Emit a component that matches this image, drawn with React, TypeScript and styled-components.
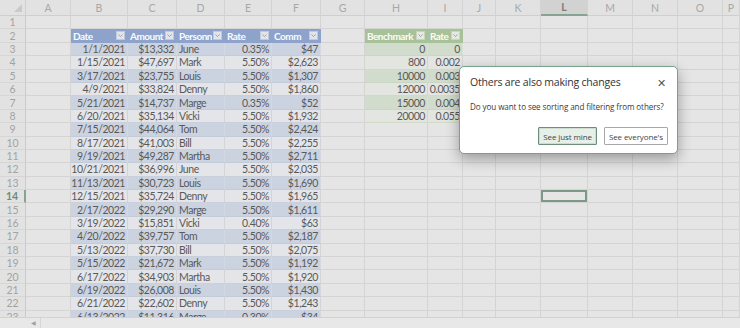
import styled, { createGlobalStyle, css } from "styled-components";

const GlobalStyle = createGlobalStyle`
  html, body {
    margin: 0;
    padding: 0;
    background: #e5e5e5;
  }
  * { box-sizing: border-box; }
`;

const cellFont = `"Lato", "Liberation Sans", sans-serif`;
const uiFont = `"Open Sans", "Noto Sans", sans-serif`;

const COL_WIDTHS = [45, 57, 49, 48, 47, 49, 44, 63, 35, 33, 45, 47, 45, 45, 45];
const LETTERS = "ABCDEFGHIJKLMNOP".split("");
const template = `26px ${COL_WIDTHS.map(w => w + "px").join(" ")} 1fr`;
const ACTIVE_COL = 12; // L
const ACTIVE_ROW = 14;

type Kind = "plain" | "blueHead" | "blueDark" | "blueLight" | "greenHead" | "greenDark" | "greenLight";
type CellData = { text?: string; kind: Kind; align?: "left" | "right"; filter?: boolean };

const sales = [
  ["1/1/2021", "$13,332", "June", "0.35%", "$47"],
  ["1/15/2021", "$47,697", "Mark", "5.50%", "$2,623"],
  ["3/17/2021", "$23,755", "Louis", "5.50%", "$1,307"],
  ["4/9/2021", "$33,824", "Denny", "5.50%", "$1,860"],
  ["5/21/2021", "$14,737", "Marge", "0.35%", "$52"],
  ["6/20/2021", "$35,134", "Vicki", "5.50%", "$1,932"],
  ["7/15/2021", "$44,064", "Tom", "5.50%", "$2,424"],
  ["8/17/2021", "$41,003", "Bill", "5.50%", "$2,255"],
  ["9/19/2021", "$49,287", "Martha", "5.50%", "$2,711"],
  ["10/21/2021", "$36,996", "June", "5.50%", "$2,035"],
  ["11/13/2021", "$30,723", "Louis", "5.50%", "$1,690"],
  ["12/15/2021", "$35,724", "Denny", "5.50%", "$1,965"],
  ["2/17/2022", "$29,290", "Marge", "5.50%", "$1,611"],
  ["3/19/2022", "$15,851", "Vicki", "0.40%", "$63"],
  ["4/20/2022", "$39,757", "Tom", "5.50%", "$2,187"],
  ["5/13/2022", "$37,730", "Bill", "5.50%", "$2,075"],
  ["5/15/2022", "$21,672", "Mark", "5.50%", "$1,192"],
  ["6/17/2022", "$34,903", "Martha", "5.50%", "$1,920"],
  ["6/19/2022", "$26,008", "Louis", "5.50%", "$1,430"],
  ["6/21/2022", "$22,602", "Denny", "5.50%", "$1,243"],
  ["6/13/2022", "$11,316", "Marge", "0.30%", "$34"],
];
const salesHead = ["Date", "Amount", "Personnel", "Rate", "Comm"];
const salesAlign: ("left" | "right")[] = ["right", "right", "left", "right", "right"];

const bench = [
  ["0", "0"],
  ["800", "0.002"],
  ["10000", "0.003"],
  ["12000", "0.0035"],
  ["15000", "0.004"],
  ["20000", "0.055"],
];

function buildRow(r: number): CellData[] {
  const cells: CellData[] = LETTERS.map(() => ({ kind: "plain" as Kind }));
  if (r === 2) {
    salesHead.forEach((h, i) => (cells[1 + i] = { text: h, kind: "blueHead", filter: true }));
    cells[7] = { text: "Benchmark", kind: "greenHead", filter: true };
    cells[8] = { text: "Rate", kind: "greenHead", filter: true };
  } else if (r >= 3) {
    const band = (r - 3) % 2 === 0;
    const s = sales[r - 3];
    s.forEach((v, i) => (cells[1 + i] = { text: v, kind: band ? "blueDark" : "blueLight", align: salesAlign[i] }));
    const b = bench[r - 3];
    if (b) {
      cells[7] = { text: b[0], kind: band ? "greenDark" : "greenLight", align: "right" };
      cells[8] = { text: b[1], kind: band ? "greenDark" : "greenLight", align: "right" };
    }
  }
  return cells;
}

const Page = styled.div`
  position: relative;
  width: 740px;
  height: 328px;
  overflow: hidden;
  display: flex;
  flex-direction: column;
  background: #e5e5e5;
`;

const SheetArea = styled.div`
  height: 317px;
  overflow: hidden;
`;

const GridRow = styled.div<{ $h: number }>`
  display: grid;
  grid-template-columns: ${template};
  height: ${p => p.$h}px;
`;

const Corner = styled.div`
  position: relative;
  background: #e2e2e2;
  border-right: 1px solid #cfcfcf;
  border-bottom: 1px solid #cfcfcf;
  &::after {
    content: "";
    position: absolute;
    right: 3px;
    bottom: 3px;
    border-style: solid;
    border-width: 0 0 8px 8px;
    border-color: transparent transparent #c9c9c9 transparent;
  }
`;

const ColHead = styled.div<{ $active?: boolean }>`
  display: flex;
  align-items: center;
  justify-content: center;
  font-family: ${cellFont};
  font-size: 10.5px;
  color: #a8a8a8;
  background: #e2e2e2;
  border-right: 1px solid #d3d3d3;
  border-bottom: 1px solid #cfcfcf;
  ${p =>
    p.$active &&
    css`
      background: #d2d2d2;
      color: #7d7d7d;
      font-weight: 700;
      border-bottom: 2px solid #86a491;
    `}
`;

const RowHead = styled.div<{ $active?: boolean }>`
  display: flex;
  align-items: center;
  justify-content: center;
  font-family: ${cellFont};
  font-size: 10.5px;
  color: #a3a3a3;
  background: #e2e2e2;
  border-right: 1px solid #cbcbcb;
  border-bottom: 1px solid #d6d6d6;
  ${p =>
    p.$active &&
    css`
      color: #6f8a78;
      font-weight: 700;
      border-right: 2px solid #86a491;
    `}
`;

const kindStyles: Record<Kind, ReturnType<typeof css>> = {
  plain: css`
    background: #e5e5e5;
  `,
  blueHead: css`
    background: #8da3cb;
    color: #fafbfd;
    font-weight: 700;
    font-size: 10px;
    letter-spacing: -0.5px;
    border-color: #8da3cb;
  `,
  blueDark: css`
    background: #ccd3e0;
    border-bottom-color: #c3cbd9;
    border-right-color: #d3d8e2;
  `,
  blueLight: css`
    background: #e4e5e8;
    border-bottom-color: #c9d0dc;
  `,
  greenHead: css`
    background: #a7c299;
    color: #fbfcfa;
    font-weight: 700;
    font-size: 10px;
    letter-spacing: -0.5px;
    border-color: #a7c299;
  `,
  greenDark: css`
    background: #d2dccc;
    border-bottom-color: #cad6c3;
    border-right-color: #d7e0d2;
  `,
  greenLight: css`
    background: #e3e5e1;
    border-bottom-color: #d0dac9;
  `,
};

const Cell = styled.div<{ $kind: Kind; $align?: "left" | "right"; $selected?: boolean }>`
  display: flex;
  align-items: center;
  justify-content: ${p => (p.$align === "right" ? "flex-end" : "flex-start")};
  gap: 1px;
  padding: 0 2px;
  overflow: hidden;
  white-space: nowrap;
  font-family: ${cellFont};
  font-size: 10.5px;
  letter-spacing: -0.45px;
  color: #595959;
  border-right: 1px solid #d4d4d4;
  border-bottom: 1px solid #d4d4d4;
  ${p => kindStyles[p.$kind]}
  ${p =>
    p.$selected &&
    css`
      box-shadow: inset 0 0 0 2px #7c9886;
    `}
`;

const HeadText = styled.span`
  flex: 1;
  overflow: hidden;
  white-space: nowrap;
`;

const FilterButton = styled.span<{ $green?: boolean }>`
  flex: none;
  width: 9px;
  height: 9px;
  display: flex;
  align-items: center;
  justify-content: center;
  background: ${p => (p.$green ? "#e4e9e1" : "#e1e4ea")};
  border: 1px solid ${p => (p.$green ? "#c8d3c1" : "#c3cad7")};
`;

const Footer = styled.div`
  flex: 1;
  display: flex;
  background: #e8e8e8;
  border-top: 1px solid #d2d2d2;
`;

const FooterGap = styled.div`
  width: 26px;
`;

const ScrollLeft = styled.div`
  width: 15px;
  display: flex;
  align-items: center;
  justify-content: center;
  border-right: 1px solid #d6d6d6;
  color: #a0a0a0;
  font-size: 6px;
  font-family: ${uiFont};
`;

const Dialog = styled.div`
  position: absolute;
  left: 459px;
  top: 66px;
  width: 219px;
  height: 88px;
  background: #ffffff;
  border: 1px solid #79a08a;
  border-radius: 5px;
  box-shadow: 0 5px 14px rgba(0, 0, 0, 0.33);
  padding: 8px 9px 8px 10px;
  display: flex;
  flex-direction: column;
  font-family: ${uiFont};
  color: #333;
`;

const DialogHead = styled.div`
  display: flex;
  align-items: center;
  justify-content: space-between;
  height: 14px;
`;

const Title = styled.div`
  font-size: 10.5px;
  letter-spacing: -0.2px;
`;

const CloseX = styled.span`
  font-size: 11px;
  color: #555;
  margin-right: 2px;
`;

const Message = styled.div`
  margin-top: 12px;
  font-size: 8.1px;
  letter-spacing: -0.1px;
  white-space: nowrap;
  color: #3a3a3a;
`;

const Actions = styled.div`
  margin-top: auto;
  display: flex;
  justify-content: flex-end;
  gap: 7px;
`;

const DialogButton = styled.button<{ $primary?: boolean }>`
  height: 18px;
  padding: 0 4px;
  font-family: ${uiFont};
  font-size: 8px;
  letter-spacing: -0.1px;
  color: #444;
  border-radius: 1px;
  background: ${p => (p.$primary ? "#e7efe9" : "#ffffff")};
  border: 1px solid ${p => (p.$primary ? "#6f8d7a" : "#a8a8a8")};
  ${p => p.$primary && css`box-shadow: inset 0 0 0 1px #cfdcd2;`}
`;

const Chevron = () => (
  <svg width="5" height="3" viewBox="0 0 5 3">
    <path d="M0.5 0.5 L2.5 2.5 L4.5 0.5" fill="none" stroke="#8a8a8a" strokeWidth="0.7" />
  </svg>
);

const App = () => {
  const rows = Array.from({ length: 23 }, (_, i) => i + 1);
  return (
    <Page>
      <GlobalStyle />
      <SheetArea>
        <GridRow $h={16}>
          <Corner />
          {LETTERS.map((l, i) => (
            <ColHead key={l} $active={i === ACTIVE_COL - 1}>
              {l}
            </ColHead>
          ))}
        </GridRow>
        {rows.map(r => (
          <GridRow key={r} $h={13.4}>
            <RowHead $active={r === ACTIVE_ROW}>{r}</RowHead>
            {buildRow(r).map((c, i) => (
              <Cell
                key={i}
                $kind={c.kind}
                $align={c.align}
                $selected={r === ACTIVE_ROW && i === ACTIVE_COL - 1}
              >
                {c.filter ? (
                  <>
                    <HeadText>{c.text}</HeadText>
                    <FilterButton $green={c.kind === "greenHead"}>
                      <Chevron />
                    </FilterButton>
                  </>
                ) : (
                  c.text
                )}
              </Cell>
            ))}
          </GridRow>
        ))}
      </SheetArea>
      <Footer>
        <FooterGap />
        <ScrollLeft>◀</ScrollLeft>
      </Footer>
      <Dialog>
        <DialogHead>
          <Title>Others are also making changes</Title>
          <CloseX>✕</CloseX>
        </DialogHead>
        <Message>Do you want to see sorting and filtering from others?</Message>
        <Actions>
          <DialogButton $primary>See just mine</DialogButton>
          <DialogButton>See everyone's</DialogButton>
        </Actions>
      </Dialog>
    </Page>
  );
};

export default App;
